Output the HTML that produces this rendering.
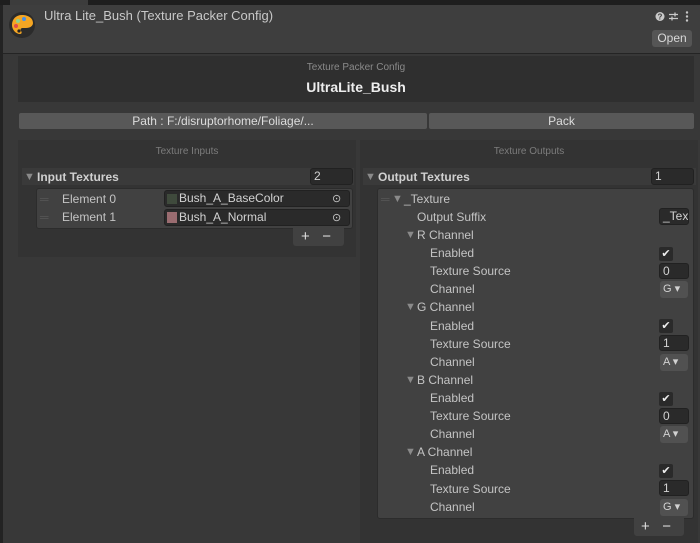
<!DOCTYPE html>
<html><head><style>
*{margin:0;padding:0;box-sizing:border-box}
body{width:700px;height:543px;background:#383838;font-family:"Liberation Sans",sans-serif;font-size:12px;color:#c4c4c4;position:relative;overflow:hidden}
div,span{position:absolute}
.t{white-space:nowrap;line-height:16px}
.fld{background:#2a2a2a;border:1px solid #212121;border-radius:3px;color:#d2d2d2;padding-left:3px;line-height:14px}
.chk{width:14px;height:14px;background:#2a2a2a;border-radius:2px;color:#eee;font-size:11px;line-height:14px;text-align:center}
.dd{width:28px;height:17px;background:#515151;border-radius:3px;color:#d2d2d2;padding-left:3px;line-height:17px;font-size:11px}
.tri{font-size:11px;color:#8a8a8a}
</style></head><body>
<div style="left:0;top:0;width:700px;height:5px;background:#1e1e1e"></div>
<div style="left:10px;top:0;width:78px;height:5px;background:#3c3c3c"></div>
<div style="left:0;top:5px;width:3px;height:538px;background:#232323"></div>
<div style="left:3px;top:5px;width:697px;height:48px;background:#3e3e3e"></div>
<div style="left:3px;top:53px;width:697px;height:1px;background:#242424"></div>
<svg style="position:absolute;left:8px;top:11px" width="28" height="28" viewBox="0 0 28 28"><circle cx="14" cy="14" r="13" fill="#2b2b2b"/><path d="M14 4C8 4 4 8 4 14c0 5 4 9 8 9 2 0 2-2 1-3-1-2 0-3 2-3h3c4 0 7-2 7-5 0-5-5-8-11-8z" fill="#f5a623"/><circle cx="10" cy="10" r="2" fill="#8fd08f"/><circle cx="16" cy="8" r="2" fill="#4a90e2"/><circle cx="8" cy="15" r="2" fill="#e24a4a"/><circle cx="11" cy="20" r="1.6" fill="#222"/></svg>
<div class="t" style="left:44px;top:8px;font-size:13px;color:#c8c8c8">Ultra Lite_Bush (Texture Packer Config)</div>
<svg style="position:absolute;left:655px;top:11px" width="38" height="11" viewBox="0 0 38 11"><circle cx="5" cy="5.5" r="4.5" fill="#c8c8c8"/><text x="5" y="8.5" font-size="8" font-weight="bold" text-anchor="middle" fill="#3e3e3e" font-family="Liberation Sans">?</text><path d="M14 3.5h9M14 7.5h9M20 1.5v4M17 5.5v4" stroke="#c8c8c8" stroke-width="1.3"/><circle cx="32" cy="1.5" r="1.2" fill="#c8c8c8"/><circle cx="32" cy="5.5" r="1.2" fill="#c8c8c8"/><circle cx="32" cy="9.5" r="1.2" fill="#c8c8c8"/></svg>
<div style="left:652px;top:30px;width:40px;height:17px;background:#555;border-radius:3px;color:#d8d8d8;text-align:center;line-height:17px;font-size:12px">Open</div>
<div style="left:18px;top:56px;width:676px;height:46px;background:#2f2f2f"></div>
<div class="t" style="left:18px;top:60px;width:676px;text-align:center;font-size:10px;color:#8a8a8a">Texture Packer Config</div>
<div class="t" style="left:18px;top:79px;width:676px;text-align:center;font-size:14px;font-weight:bold;color:#eee">UltraLite_Bush</div>
<div style="left:19px;top:113px;width:408px;height:16px;background:#585858;border-radius:2px;text-align:center;line-height:16px;color:#ddd">Path : F:/disruptorhome/Foliage/...</div>
<div style="left:429px;top:113px;width:265px;height:16px;background:#585858;border-radius:2px;text-align:center;line-height:16px;color:#ddd">Pack</div>
<!-- left -->
<div style="left:18px;top:140px;width:338px;height:117px;background:#333"></div>
<div class="t" style="left:18px;top:144px;width:338px;text-align:center;font-size:10px;color:#7c7c7c">Texture Inputs</div>
<div style="left:22px;top:168px;width:332px;height:17px;background:#3a3a3a"></div>
<div class="t tri" style="left:24px;top:169px">▼</div>
<div class="t" style="left:37px;top:169px;font-weight:bold;color:#d0d0d0">Input Textures</div>
<div class="fld" style="left:310px;top:168px;width:43px;height:17px">2</div>
<div style="left:36px;top:188px;width:317px;height:41px;background:#414141;border:1px solid #2c2c2c;border-radius:3px"></div>
<div class="t" style="left:40px;top:191px;color:#555">═</div>
<div class="t" style="left:40px;top:209px;color:#555">═</div>
<div class="t" style="left:62px;top:191px">Element 0</div>
<div class="t" style="left:62px;top:209px">Element 1</div>
<div class="fld" style="left:164px;top:190px;width:186px;height:17px;padding-left:14px">Bush_A_BaseColor</div>
<div style="left:167px;top:194px;width:10px;height:10px;background:#3f4a3c"></div>
<div class="fld" style="left:164px;top:209px;width:186px;height:17px;padding-left:14px">Bush_A_Normal</div>
<div style="left:167px;top:212px;width:10px;height:11px;background:#9a6c70"></div>
<div class="t" style="left:332px;top:191px;font-size:11px">⊙</div>
<div class="t" style="left:332px;top:210px;font-size:11px">⊙</div>
<div style="left:293px;top:228px;width:51px;height:18px;background:#414141;border-radius:0 0 3px 3px"></div>
<div class="t" style="left:301px;top:229px;font-size:15px;color:#ddd">+&nbsp;&nbsp;&nbsp;−</div>
<!-- right -->
<div style="left:360px;top:140px;width:338px;height:403px;background:#333"></div>
<div class="t" style="left:360px;top:144px;width:338px;text-align:center;font-size:10px;color:#7c7c7c">Texture Outputs</div>
<div style="left:363px;top:168px;width:333px;height:17px;background:#3a3a3a"></div>
<div class="t tri" style="left:365px;top:169px">▼</div>
<div class="t" style="left:378px;top:169px;font-weight:bold;color:#d0d0d0">Output Textures</div>
<div class="fld" style="left:651px;top:168px;width:43px;height:17px">1</div>
<div style="left:377px;top:188px;width:317px;height:331px;background:#414141;border:1px solid #2c2c2c;border-radius:3px"></div>
<div class="t" style="left:381px;top:191px;color:#555">═</div>
<div class="t tri" style="left:392px;top:191px">▼</div>
<div class="t" style="left:404px;top:191px">_Texture</div>
<div class="t" style="left:417px;top:209px">Output Suffix</div>
<div class="fld" style="left:659px;top:208px;width:30px;height:17px;overflow:hidden">_Tex</div>

<div class="t tri" style="left:405px;top:227px">▼</div><div class="t" style="left:417px;top:227px">R Channel</div>
<div class="t" style="left:430px;top:245px">Enabled</div><div class="chk" style="left:659px;top:247px">✔</div>
<div class="t" style="left:430px;top:263px">Texture Source</div><div class="fld" style="left:659px;top:263px;width:30px;height:16px">0</div>
<div class="t" style="left:430px;top:281px">Channel</div><div class="dd" style="left:660px;top:281px">G ▾</div>

<div class="t tri" style="left:405px;top:299px">▼</div><div class="t" style="left:417px;top:299px">G Channel</div>
<div class="t" style="left:430px;top:318px">Enabled</div><div class="chk" style="left:659px;top:319px">✔</div>
<div class="t" style="left:430px;top:336px">Texture Source</div><div class="fld" style="left:659px;top:335px;width:30px;height:16px">1</div>
<div class="t" style="left:430px;top:354px">Channel</div><div class="dd" style="left:660px;top:354px">A ▾</div>

<div class="t tri" style="left:405px;top:372px">▼</div><div class="t" style="left:417px;top:372px">B Channel</div>
<div class="t" style="left:430px;top:390px">Enabled</div><div class="chk" style="left:659px;top:392px">✔</div>
<div class="t" style="left:430px;top:408px">Texture Source</div><div class="fld" style="left:659px;top:408px;width:30px;height:16px">0</div>
<div class="t" style="left:430px;top:426px">Channel</div><div class="dd" style="left:660px;top:426px">A ▾</div>

<div class="t tri" style="left:405px;top:444px">▼</div><div class="t" style="left:417px;top:444px">A Channel</div>
<div class="t" style="left:430px;top:462px">Enabled</div><div class="chk" style="left:659px;top:464px">✔</div>
<div class="t" style="left:430px;top:481px">Texture Source</div><div class="fld" style="left:659px;top:480px;width:30px;height:16px">1</div>
<div class="t" style="left:430px;top:499px">Channel</div><div class="dd" style="left:660px;top:499px">G ▾</div>

<div style="left:634px;top:518px;width:50px;height:18px;background:#414141;border-radius:0 0 3px 3px"></div>
<div class="t" style="left:641px;top:519px;font-size:15px;color:#ddd">+&nbsp;&nbsp;&nbsp;−</div>
</body></html>
